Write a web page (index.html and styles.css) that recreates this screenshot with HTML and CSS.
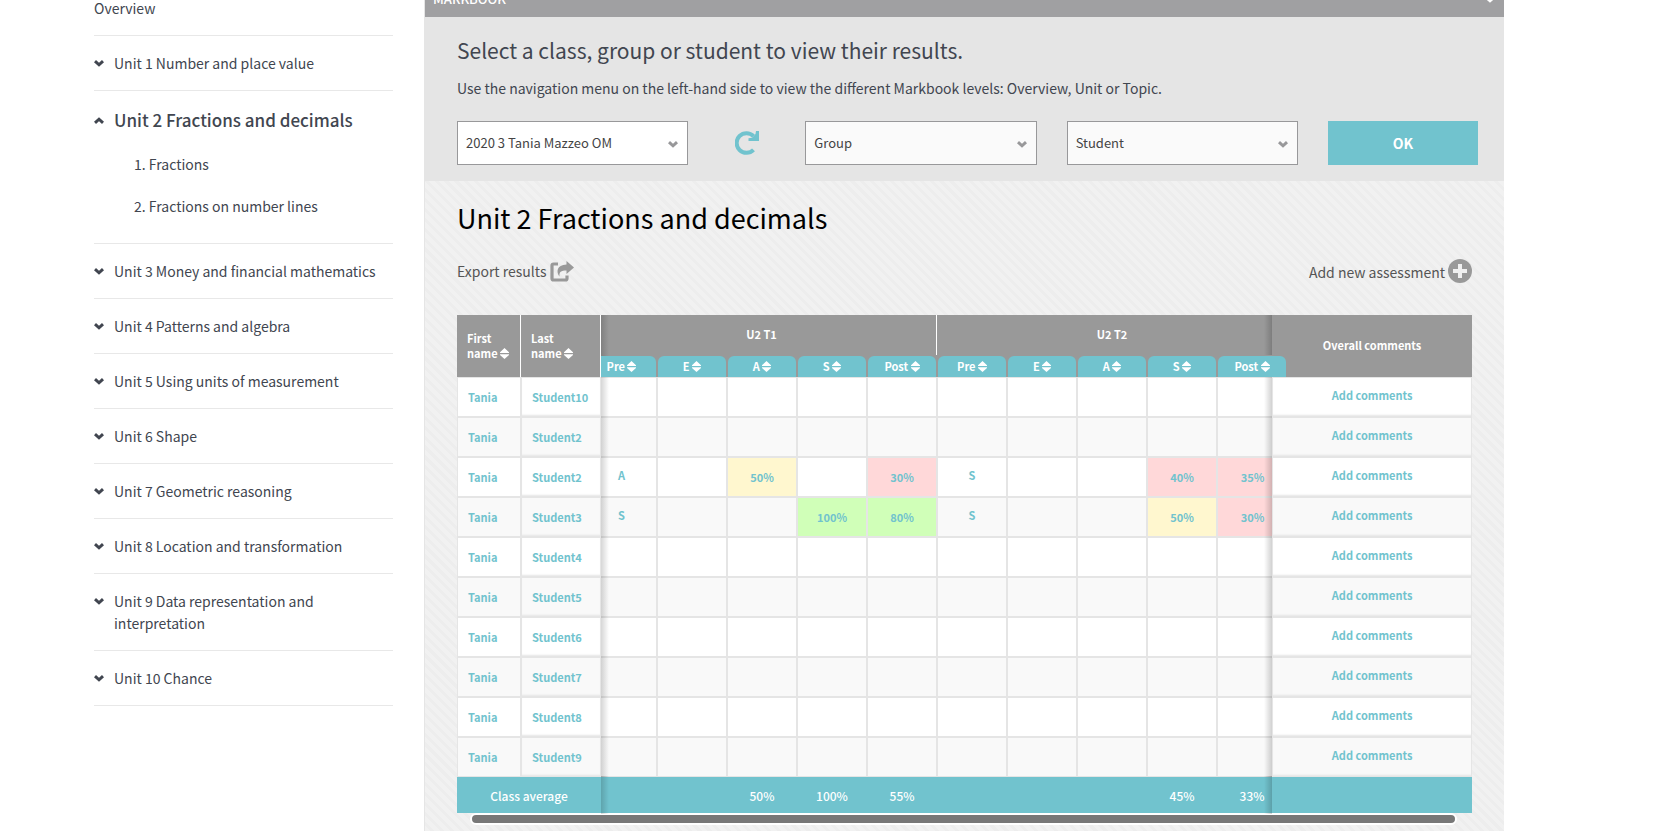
FILE: index.html
```html
<!DOCTYPE html>
<html lang="en">
<head>
<meta charset="utf-8">
<title>Markbook</title>
<link rel="stylesheet" href="styles.css">
</head>
<body>
<svg class="symbols" aria-hidden="true">
  <symbol id="caret" viewBox="0 0 10 7"><path d="M1 1.200 5 4.800 9 1.200" fill="none" stroke="currentColor" stroke-width="3"/></symbol>
  <symbol id="sort" viewBox="0 0 9 11"><path d="M4.500 0 9 4.200V5H0V4.200ZM0 6.200H9V7L4.500 11 0 7Z"/></symbol>
</svg>
<div class="page">
  <nav class="units">
    <ul>
      <li class="unit"><a href="#">Overview</a></li>
      <li class="unit"><svg class="arrow"><use href="#caret"/></svg><a href="#">Unit 1 Number and place value</a></li>
      <li class="unit unit-open">
        <div class="unit-head"><svg class="arrow arrow-up"><use href="#caret"/></svg><a href="#">Unit 2 Fractions and decimals</a></div>
        <ul class="topics">
          <li><a href="#">1. Fractions</a></li>
          <li><a href="#">2. Fractions on number lines</a></li>
        </ul>
      </li>
      <li class="unit"><svg class="arrow"><use href="#caret"/></svg><a href="#">Unit 3 Money and financial mathematics</a></li>
      <li class="unit"><svg class="arrow"><use href="#caret"/></svg><a href="#">Unit 4 Patterns and algebra</a></li>
      <li class="unit"><svg class="arrow"><use href="#caret"/></svg><a href="#">Unit 5 Using units of measurement</a></li>
      <li class="unit"><svg class="arrow"><use href="#caret"/></svg><a href="#">Unit 6 Shape</a></li>
      <li class="unit"><svg class="arrow"><use href="#caret"/></svg><a href="#">Unit 7 Geometric reasoning</a></li>
      <li class="unit"><svg class="arrow"><use href="#caret"/></svg><a href="#">Unit 8 Location and transformation</a></li>
      <li class="unit"><svg class="arrow"><use href="#caret"/></svg><a href="#">Unit 9 Data representation and<br>interpretation</a></li>
      <li class="unit"><svg class="arrow"><use href="#caret"/></svg><a href="#">Unit 10 Chance</a></li>
    </ul>
  </nav>
  <main class="markbook">
    <header class="bar"><span>MARKBOOK</span><svg class="arrow"><use href="#caret"/></svg></header>
    <section class="filters">
      <h2>Select a class, group or student to view their results.</h2>
      <p>Use the navigation menu on the left-hand side to view the different Markbook levels: Overview, Unit or Topic.</p>
      <form class="controls">
        <div class="select select-active"><select aria-label="Class"><option>2020 3 Tania Mazzeo OM</option></select><svg class="arrow"><use href="#caret"/></svg></div>
        <button type="button" class="refresh" aria-label="Refresh">
          <svg viewBox="0 0 24 24"><path d="M18.500 18.800A9.800 9.800 0 1 1 18.500 5.200" fill="none" stroke="currentColor" stroke-width="4"/><path d="M24 0V10H13.500V7.200L17 6.800 20.500 3 21 0Z" fill="currentColor"/></svg>
        </button>
        <div class="select"><select aria-label="Group"><option>Group</option></select><svg class="arrow"><use href="#caret"/></svg></div>
        <div class="select"><select aria-label="Student"><option>Student</option></select><svg class="arrow"><use href="#caret"/></svg></div>
        <button type="button" class="ok">OK</button>
      </form>
    </section>
    <section class="results">
      <h1>Unit 2 Fractions and decimals</h1>
      <div class="actions">
        <a href="#" class="export">Export results
          <svg viewBox="0 0 24 21"><path d="M8 3H3.500Q2 3 2 4.500V17.500Q2 19 3.500 19H15.500Q17 19 17 17.500V14.500" fill="none" stroke="currentColor" stroke-width="3.200"/><path d="M16.500 0 24 6.500 16.500 13V9.500C11 9.500 9 11 9.500 15.500 6 11 6.500 4 16.500 3.500Z" fill="currentColor"/></svg></a>
        <a href="#" class="add">Add new assessment
          <svg viewBox="0 0 24 24"><circle cx="12" cy="12" r="12" fill="currentColor"/><path d="M12 5V19M5 12H19" stroke="#f0f0f0" stroke-width="4"/></svg></a>
      </div>
      <table class="scores">
        <colgroup><col class="c-first"><col class="c-last"><col class="c-pre"><col class="c" span="8"><col class="c-post"><col class="c-comment"></colgroup>
        <thead>
          <tr class="topic-row">
            <th rowspan="2" class="name"><button>First<br>name <svg><use href="#sort"/></svg></button></th>
            <th rowspan="2" class="name"><button>Last<br>name <svg><use href="#sort"/></svg></button></th>
            <th colspan="5" class="topic shade-left"><span class="topic-one">U2 T1</span></th>
            <th colspan="5" class="topic shade-right"><span class="topic-two">U2 T2</span></th>
            <th rowspan="2" class="overall">Overall comments</th>
          </tr>
          <tr class="tab-row">
            <th class="cut-left"><button class="tab">Pre <svg><use href="#sort"/></svg></button></th>
            <th><button class="tab">E <svg><use href="#sort"/></svg></button></th>
            <th><button class="tab">A <svg><use href="#sort"/></svg></button></th>
            <th><button class="tab">S <svg><use href="#sort"/></svg></button></th>
            <th><button class="tab">Post <svg><use href="#sort"/></svg></button></th>
            <th><button class="tab">Pre <svg><use href="#sort"/></svg></button></th>
            <th><button class="tab">E <svg><use href="#sort"/></svg></button></th>
            <th><button class="tab">A <svg><use href="#sort"/></svg></button></th>
            <th><button class="tab">S <svg><use href="#sort"/></svg></button></th>
            <th class="tab-over"><button class="tab">Post <svg><use href="#sort"/></svg></button></th>
          </tr>
        </thead>
        <tbody>
          <tr><td><a href="#">Tania</a></td><td class="last"><a href="#">Student10</a></td><td class="cut-left shade-left"></td><td></td><td></td><td></td><td></td><td></td><td></td><td></td><td></td><td class="cut-right shade-right"></td><td class="comment"><a href="#">Add comments</a></td></tr>
          <tr><td><a href="#">Tania</a></td><td class="last"><a href="#">Student2</a></td><td class="cut-left shade-left"></td><td></td><td></td><td></td><td></td><td></td><td></td><td></td><td></td><td class="cut-right shade-right"></td><td class="comment"><a href="#">Add comments</a></td></tr>
          <tr><td><a href="#">Tania</a></td><td class="last"><a href="#">Student2</a></td><td class="cut-left shade-left grade"><a href="#">A</a></td><td></td><td class="mid"><a href="#">50%</a></td><td></td><td class="low"><a href="#">30%</a></td><td class="grade"><a href="#">S</a></td><td></td><td></td><td class="low"><a href="#">40%</a></td><td class="cut-right shade-right low"><a href="#">35%</a></td><td class="comment"><a href="#">Add comments</a></td></tr>
          <tr><td><a href="#">Tania</a></td><td class="last"><a href="#">Student3</a></td><td class="cut-left shade-left grade"><a href="#">S</a></td><td></td><td></td><td class="high"><a href="#">100%</a></td><td class="high"><a href="#">80%</a></td><td class="grade"><a href="#">S</a></td><td></td><td></td><td class="mid"><a href="#">50%</a></td><td class="cut-right shade-right low"><a href="#">30%</a></td><td class="comment"><a href="#">Add comments</a></td></tr>
          <tr><td><a href="#">Tania</a></td><td class="last"><a href="#">Student4</a></td><td class="cut-left shade-left"></td><td></td><td></td><td></td><td></td><td></td><td></td><td></td><td></td><td class="cut-right shade-right"></td><td class="comment"><a href="#">Add comments</a></td></tr>
          <tr><td><a href="#">Tania</a></td><td class="last"><a href="#">Student5</a></td><td class="cut-left shade-left"></td><td></td><td></td><td></td><td></td><td></td><td></td><td></td><td></td><td class="cut-right shade-right"></td><td class="comment"><a href="#">Add comments</a></td></tr>
          <tr><td><a href="#">Tania</a></td><td class="last"><a href="#">Student6</a></td><td class="cut-left shade-left"></td><td></td><td></td><td></td><td></td><td></td><td></td><td></td><td></td><td class="cut-right shade-right"></td><td class="comment"><a href="#">Add comments</a></td></tr>
          <tr><td><a href="#">Tania</a></td><td class="last"><a href="#">Student7</a></td><td class="cut-left shade-left"></td><td></td><td></td><td></td><td></td><td></td><td></td><td></td><td></td><td class="cut-right shade-right"></td><td class="comment"><a href="#">Add comments</a></td></tr>
          <tr><td><a href="#">Tania</a></td><td class="last"><a href="#">Student8</a></td><td class="cut-left shade-left"></td><td></td><td></td><td></td><td></td><td></td><td></td><td></td><td></td><td class="cut-right shade-right"></td><td class="comment"><a href="#">Add comments</a></td></tr>
          <tr><td><a href="#">Tania</a></td><td class="last"><a href="#">Student9</a></td><td class="cut-left shade-left"></td><td></td><td></td><td></td><td></td><td></td><td></td><td></td><td></td><td class="cut-right shade-right"></td><td class="comment"><a href="#">Add comments</a></td></tr>
        </tbody>
        <tfoot>
          <tr><th colspan="2">Class average</th><td class="shade-left"></td><td></td><td>50%</td><td>100%</td><td>55%</td><td></td><td></td><td></td><td>45%</td><td class="cut-right shade-right">33%</td><td></td></tr>
        </tfoot>
      </table>
      <div class="scroll-thumb"></div>
    </section>
  </main>
</div>
</body>
</html>
```

FILE: styles.css
```css
* { box-sizing: border-box; }

body {
  margin: 0;
  background: #fff;
  color: #414650;
  font: 14px/22px "Noto Sans CJK SC", "Open Sans", sans-serif;
}

a { color: inherit; text-decoration: none; }
ul { list-style: none; margin: 0; padding: 0; }
button, select { font: inherit; }
button { border: 0; padding: 0; background: none; color: inherit; cursor: pointer; }
.symbols { display: none; }

/* The top of the page is scrolled out of view. */
.page {
  display: flex;
  gap: 31px;
  min-height: calc(100vh + 19px);
  margin-top: -19px;
  padding: 0 165px 0 94px;
}

.arrow { flex: none; width: 10px; height: 7px; }

/* Unit navigation */
.units { flex: none; width: 299px; }
.unit {
  display: flex;
  align-items: flex-start;
  gap: 10px;
  padding: 16px 0;
  border-bottom: 1px solid #e8e8e8;
}
.unit .arrow { margin-top: 8px; }
.unit-open { display: block; }
.unit-head {
  display: flex;
  gap: 10px;
  font-size: 17px;
  font-weight: 500;
  line-height: 26px;
}
.unit-head .arrow { margin-top: 10px; }
.arrow-up { transform: rotate(180deg); }
.topics { padding: 10px 0 0 40px; }
.topics li { padding: 10px 0; }

/* Markbook panel */
.markbook {
  flex: 1;
  min-width: 0;
  border-left: 1px solid #e5e5e5;
  background: repeating-linear-gradient(45deg, #f1f1f1 0 4px, #ededed 4px 7px);
}
.bar {
  display: flex;
  align-items: center;
  justify-content: space-between;
  height: 36px;
  padding: 0 9px 0 8px;
  background: #a0a0a2;
  color: #fff;
  font-size: 13px;
  font-weight: 500;
}

.filters { padding: 19px 26px 16px 32px; background: #e5e5e5; }
.filters h2 { margin: 0; font-size: 21px; font-weight: 400; line-height: 28px; }
.filters p { margin: 13px 0 22px; }
.controls { display: flex; align-items: stretch; height: 44px; }
.select { position: relative; flex: 1; margin-right: 30px; }
.select-active { margin-right: 0; }
.select select {
  width: 100%;
  height: 100%;
  padding: 0 30px 0 8px;
  border: 1px solid #98989a;
  border-radius: 0;
  background: #fafafa;
  color: #444;
  font-size: 13px;
  appearance: none;
}
.select-active select { background: #fff; }
.select .arrow { position: absolute; top: 20px; right: 10px; color: #98989a; pointer-events: none; }
.refresh { display: grid; place-items: center; width: 117px; color: #71c3ce; }
.refresh svg { width: 24px; height: 24px; }
.ok { width: 150px; background: #71c3ce; color: #fff; font-weight: 700; }

.results { padding: 19px 32px 5px; }
.results h1 { margin: 0; color: #000; font-size: 27px; font-weight: 400; line-height: 36px; }
.actions {
  display: flex;
  align-items: center;
  justify-content: space-between;
  height: 28px;
  margin: 21px 0 30px;
  color: #555;
}
.actions svg { color: #999; }
.export, .add { display: flex; align-items: flex-end; gap: 3px; }
.export svg { width: 24px; height: 21px; }
.add svg { width: 24px; height: 24px; }

/* Score table */
.scores {
  width: 100%;
  table-layout: fixed;
  border-collapse: separate;
  border-spacing: 0;
  color: #71c3ce;
  font-size: 11px;
  font-weight: 700;
  line-height: 15px;
  text-align: center;
}
.scores th, .scores td { padding: 0; }
.c-first { width: 64px; }
.c-last { width: 80px; }
.c-pre { width: 56px; }
.c { width: 70px; }
.c-post { width: 55px; }
.c-comment { width: 200px; }

thead th { background: #999; color: #fff; }
thead svg { width: 9px; height: 11px; fill: currentColor; vertical-align: -1px; }
.topic-row { height: 40px; }
.scores .topic, .scores .overall { padding-bottom: 2px; }
.name { border-right: 1px solid #fff; text-align: left; }
.name button { padding-left: 10px; text-align: left; }
.topic-one { padding-right: 14px; }
.topic-two { padding-left: 15px; }
.topic.shade-left { border-right: 1px solid #fff; }
.tab-row { height: 22px; }
.tab-row th { vertical-align: bottom; }
.tab {
  display: block;
  width: calc(100% - 2px);
  height: 21px;
  margin: 0 1px;
  border-radius: 6px 6px 0 0;
  background: #71c3ce;
}
.cut-left .tab { width: calc(100% - 1px); margin-left: 0; padding-right: 14px; border-top-left-radius: 0; }
.tab-over { position: relative; z-index: 1; }
.tab-over .tab { width: 68px; }

tbody tr { height: 40px; }
tbody td { border: 1px solid #e5e5e5; background: #fff; }
tbody tr:nth-child(even) td { background: #f9f9f9; }
tbody td:nth-child(-n+2) { padding-left: 10px; text-align: left; }
tbody .last, tbody .comment { box-shadow: inset 0 -2px 2px -1px #e5e5e5; }
tbody .comment, tbody .grade { padding-bottom: 4px; }
tbody .cut-left { border-left: 0; padding-right: 14px; }
tbody .cut-right { border-right: 0; }
.scores .cut-right { padding-left: 15px; }
tbody tr .mid, tbody tr:nth-child(even) .mid { background: #fff7cf; }
tbody tr .low, tbody tr:nth-child(even) .low { background: #ffd8d9; }
tbody tr .high, tbody tr:nth-child(even) .high { background: #d0ffb8; }

tfoot tr { height: 36px; background: #71c3ce; color: #fff; font-size: 12px; }
tfoot th, tfoot td { font-weight: 500; }

/* Shadows cast by the pinned columns */
.shade-left, .shade-right { position: relative; }
.shade-left::after, .shade-right::after {
  content: "";
  position: absolute;
  top: -1px;
  bottom: -1px;
  width: 8px;
  pointer-events: none;
}
.topic::after { top: 0; }
.shade-left::after { left: 0; background: linear-gradient(to right, rgba(0, 0, 0, .16), transparent); }
.shade-right::after { right: 0; background: linear-gradient(to left, rgba(0, 0, 0, .18), transparent); }

.scroll-thumb {
  height: 12px;
  margin: 0 15px 0 13px;
  border: 2px solid #fff;
  border-radius: 6px;
  background: #777;
}
```
